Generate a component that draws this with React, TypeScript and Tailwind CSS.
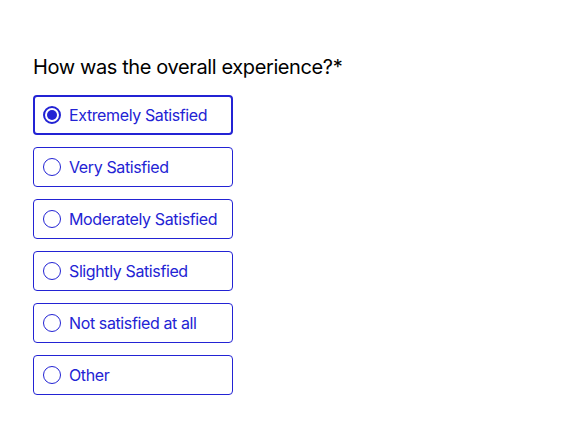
import { useState } from 'react';

const options = [
  'Extremely Satisfied',
  'Very Satisfied',
  'Moderately Satisfied',
  'Slightly Satisfied',
  'Not satisfied at all',
  'Other',
];

export default function App() {
  const [selected, setSelected] = useState(0);

  return (
    <div className="min-h-screen bg-white pl-[33px] pt-[55px] font-['Inter',sans-serif] tracking-[-0.024em]">
      <h2 className="text-[20px] leading-[24px] text-black">How was the overall experience?*</h2>
      <div className="mt-[16px] flex flex-col gap-[12px]">
        {options.map((label, i) => {
          const active = i === selected;
          return (
            <button
              key={label}
              type="button"
              onClick={() => setSelected(i)}
              className={`flex h-[40px] w-[200px] items-center gap-[8px] whitespace-nowrap rounded-[4px] text-left text-[16px] text-[#2323d4] ${
                active ? 'border-2 border-[#2323d4] px-[8px]' : 'border border-[#2323d4] px-[9px]'
              }`}
            >
              <span
                className={`flex h-[18px] w-[18px] shrink-0 items-center justify-center rounded-full border-[#2323d4] ${
                  active ? 'border-2' : 'border'
                }`}
              >
                {active && <span className="h-[10px] w-[10px] rounded-full bg-[#2323d4]" />}
              </span>
              <span>{label}</span>
            </button>
          );
        })}
      </div>
    </div>
  );
}
